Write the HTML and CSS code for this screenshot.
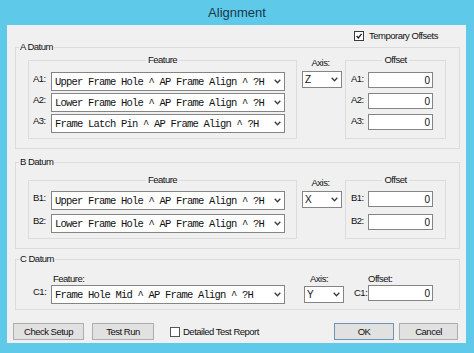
FILE: index.html
```html
<!DOCTYPE html>
<html lang="en">
<head>
    <meta charset="UTF-8">
    <title>Alignment</title>
    <link rel="stylesheet" href="styles.css">
</head>
<body>
    <div class="window">
        <div class="titlebar">Alignment</div>
        <div class="client">
            <div class="top-row">
                <label class="check">
                    <span class="box"><svg viewBox="0 0 10 10"><polyline points="2,5 4.2,7.4 8.2,2.4"/></svg></span>
                    Temporary Offsets
                </label>
            </div>

            <fieldset class="group group-a">
                <legend>A Datum</legend>
                <div class="group-body">
                    <fieldset class="sub feature">
                        <legend>Feature</legend>
                        <div class="rows">
                            <div class="row"><span class="lbl">A1:</span><div class="combo wide"><span>Upper Frame Hole ^ AP Frame Align ^ ?H</span><svg class="chev" viewBox="0 0 7 5"><polyline points="0.7,0.8 3.5,3.8 6.3,0.8"/></svg></div></div>
                            <div class="row"><span class="lbl">A2:</span><div class="combo wide"><span>Lower Frame Hole ^ AP Frame Align ^ ?H</span><svg class="chev" viewBox="0 0 7 5"><polyline points="0.7,0.8 3.5,3.8 6.3,0.8"/></svg></div></div>
                            <div class="row"><span class="lbl">A3:</span><div class="combo wide"><span>Frame Latch Pin ^ AP Frame Align ^ ?H</span><svg class="chev" viewBox="0 0 7 5"><polyline points="0.7,0.8 3.5,3.8 6.3,0.8"/></svg></div></div>
                        </div>
                    </fieldset>
                    <div class="axis">
                        <span class="axis-lbl">Axis:</span>
                        <div class="combo small"><span>Z</span><svg class="chev" viewBox="0 0 7 5"><polyline points="0.7,0.8 3.5,3.8 6.3,0.8"/></svg></div>
                    </div>
                    <fieldset class="sub offset">
                        <legend>Offset</legend>
                        <div class="rows">
                            <div class="row"><span class="lbl">A1:</span><input class="num" type="text" value="0"></div>
                            <div class="row"><span class="lbl">A2:</span><input class="num" type="text" value="0"></div>
                            <div class="row"><span class="lbl">A3:</span><input class="num" type="text" value="0"></div>
                        </div>
                    </fieldset>
                </div>
            </fieldset>

            <fieldset class="group group-b">
                <legend>B Datum</legend>
                <div class="group-body">
                    <fieldset class="sub feature">
                        <legend>Feature</legend>
                        <div class="rows">
                            <div class="row"><span class="lbl">B1:</span><div class="combo wide"><span>Upper Frame Hole ^ AP Frame Align ^ ?H</span><svg class="chev" viewBox="0 0 7 5"><polyline points="0.7,0.8 3.5,3.8 6.3,0.8"/></svg></div></div>
                            <div class="row"><span class="lbl">B2:</span><div class="combo wide"><span>Lower Frame Hole ^ AP Frame Align ^ ?H</span><svg class="chev" viewBox="0 0 7 5"><polyline points="0.7,0.8 3.5,3.8 6.3,0.8"/></svg></div></div>
                        </div>
                    </fieldset>
                    <div class="axis">
                        <span class="axis-lbl">Axis:</span>
                        <div class="combo small"><span>X</span><svg class="chev" viewBox="0 0 7 5"><polyline points="0.7,0.8 3.5,3.8 6.3,0.8"/></svg></div>
                    </div>
                    <fieldset class="sub offset">
                        <legend>Offset</legend>
                        <div class="rows">
                            <div class="row"><span class="lbl">B1:</span><input class="num" type="text" value="0"></div>
                            <div class="row"><span class="lbl">B2:</span><input class="num" type="text" value="0"></div>
                        </div>
                    </fieldset>
                </div>
            </fieldset>

            <fieldset class="group group-c">
                <legend>C Datum</legend>
                <div class="c-grid">
                    <span></span>
                    <span class="head head-feature">Feature:</span>
                    <span></span>
                    <span class="head head-axis">Axis:</span>
                    <span></span>
                    <span></span>
                    <span class="head head-offset">Offset:</span>

                    <span class="lbl">C1:</span>
                    <div class="combo wide"><span>Frame Hole Mid ^ AP Frame Align ^ ?H</span><svg class="chev" viewBox="0 0 7 5"><polyline points="0.7,0.8 3.5,3.8 6.3,0.8"/></svg></div>
                    <span></span>
                    <div class="combo small c-axis"><span>Y</span><svg class="chev" viewBox="0 0 7 5"><polyline points="0.7,0.8 3.5,3.8 6.3,0.8"/></svg></div>
                    <span></span>
                    <span class="lbl c-lbl">C1:</span>
                    <input class="num c-num" type="text" value="0">
                </div>
            </fieldset>

            <div class="actions">
                <button class="btn btn-check">Check Setup</button>
                <button class="btn btn-test">Test Run</button>
                <label class="check detailed"><span class="box"></span>Detailed Test Report</label>
                <button class="btn btn-ok">OK</button>
                <button class="btn btn-cancel">Cancel</button>
            </div>
        </div>
    </div>
</body>
</html>
```

FILE: styles.css
```css
body {
    margin: 0;
    background: #5fc9ea;
    font-family: "Liberation Sans", Arial, sans-serif;
}
.window {
    width: 474px;
    height: 353px;
    background: #5fc9ea;
}
.titlebar {
    height: 25px;
    box-sizing: border-box;
    padding-top: 1px;
    line-height: 24px;
    text-align: center;
    font-size: 13px;
    color: #17384a;
}
.client {
    margin: 0 8px 0 7px;
    height: 318px;
    background: #f0f0f0;
    color: #111;
    font-size: 9.5px;
    letter-spacing: -0.5px;
    overflow: hidden;
}

/* checkboxes */
.top-row {
    height: 16px;
    box-sizing: border-box;
    padding: 6px 0 0 347px;
    display: flex;
}
.check {
    display: flex;
    align-items: center;
    gap: 5px;
    line-height: 10px;
    white-space: nowrap;
}
.box {
    width: 10px;
    height: 10px;
    box-sizing: border-box;
    border: 1px solid #3a3a3a;
    background: #fff;
    display: block;
}
.box svg {
    display: block;
    width: 8px;
    height: 8px;
}
.box polyline {
    fill: none;
    stroke: #1a1a1a;
    stroke-width: 1.6;
}

/* group boxes */
.group {
    margin: 0 0 0 8px;
    width: 445px;
    box-sizing: border-box;
    padding: 0;
    border: 1px solid #dcdcdc;
    min-width: 0;
}
.group > legend {
    margin-left: 3px;
    padding: 0 1px;
    line-height: 12px;
}
.group-body {
    display: flex;
    align-items: flex-start;
    padding: 1px 0 9px 12px;
}
.sub {
    margin: 0;
    padding: 0;
    border: 1px solid #dcdcdc;
    min-width: 0;
    box-sizing: border-box;
}
.sub > legend {
    margin: 0 auto;
    padding: 0 2px;
    line-height: 12px;
}
.feature {
    width: 269px;
}
.offset {
    width: 101px;
}
.rows {
    display: flex;
    flex-direction: column;
    gap: 2px;
    padding: 6px 0 5px 4px;
}
.offset .rows {
    padding-left: 5px;
}
.row {
    display: flex;
    align-items: flex-start;
    height: 19px;
}
.lbl {
    flex: none;
    width: 18px;
    line-height: 12px;
    margin-top: 1px;
    white-space: nowrap;
}
.offset .lbl {
    width: 17px;
}

.axis {
    width: 40px;
    margin: 0 3px 0 5px;
    display: flex;
    flex-direction: column;
    align-items: center;
}
.axis-lbl {
    line-height: 12px;
    margin-top: 3px;
    margin-right: 3px;
}
.axis .combo {
    margin-top: 2px;
}

/* combo boxes and fields */
.combo {
    box-sizing: border-box;
    height: 19px;
    border: 1px solid #858585;
    background: #fff;
    display: flex;
    align-items: center;
    justify-content: space-between;
    padding: 0 3px 0 3px;
    white-space: nowrap;
    overflow: hidden;
}
.combo.wide {
    width: 234px;
    font-family: "Liberation Mono", "Courier New", monospace;
    font-size: 10.5px;
    letter-spacing: -0.8px;
}
.combo.small {
    width: 40px;
    height: 17px;
    padding: 0 3px 0 2px;
    font-size: 10px;
    letter-spacing: 0;
}
.chev {
    flex: none;
    width: 7px;
    height: 5px;
}
.chev polyline {
    fill: none;
    stroke: #3c3c3c;
    stroke-width: 1.3;
}
.num {
    box-sizing: border-box;
    width: 65px;
    height: 16px;
    margin: 0;
    border: 1px solid #858585;
    padding: 0 2px;
    background: #fff;
    color: #111;
    font-family: inherit;
    font-size: 10px;
    text-align: right;
    outline: none;
}

.group-b {
    margin-top: 7px;
}
.group-b .group-body {
    padding-top: 6px;
}
.group-b .feature .rows,
.group-b .offset .rows {
    padding-top: 5px;
    gap: 4px;
}

.group-c {
    margin-top: 4px;
}
.c-grid {
    display: grid;
    grid-template-columns: 18px 234px 19px 41px 9px 14px 65px;
    grid-template-rows: 12px 19px;
    align-items: start;
    padding: 8px 0 5px 17px;
}
.head {
    line-height: 12px;
    white-space: nowrap;
}
.head-feature {
    padding-left: 2px;
}
.head-axis {
    padding-left: 6px;
}
.head-offset {
    padding-left: 0;
}
.c-lbl {
    width: 14px;
    margin-top: 2px;
}
.c-axis {
    margin-top: 1px;
    width: 41px;
    height: 16px;
}
.c-num {
    width: 65px;
}

/* bottom buttons */
.actions {
    display: flex;
    align-items: center;
    height: 17px;
    margin-top: 13px;
    padding: 0 8px 0 6px;
}
.btn {
    height: 17px;
    box-sizing: border-box;
    margin: 0;
    padding: 0;
    border: 1px solid #adadad;
    background: #e1e1e1;
    color: #111;
    font-family: inherit;
    font-size: 9.5px;
    letter-spacing: -0.5px;
}
.btn-check {
    width: 71px;
}
.btn-test {
    width: 62px;
    margin-left: 8px;
}
.detailed {
    margin-left: 16px;
    gap: 3px;
}
.detailed .box {
    border-color: #555;
}
.btn-ok {
    width: 60px;
    margin-left: auto;
    border-color: #6f92b8;
}
.btn-cancel {
    width: 59px;
    margin-left: 5px;
}
```
